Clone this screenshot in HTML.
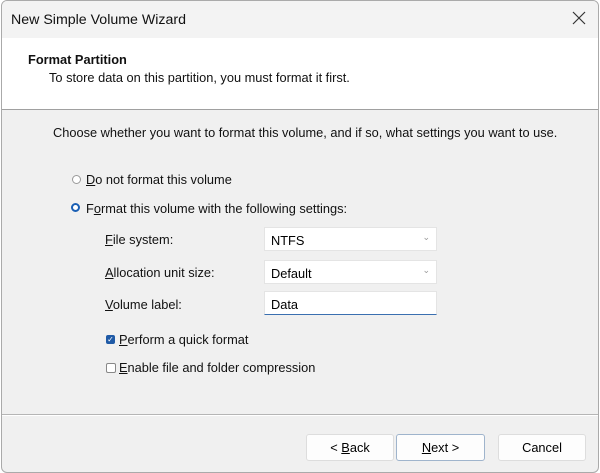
<!DOCTYPE html><html><head><style>
body{margin:0;width:600px;height:473px;background:#fff;font-family:"Liberation Sans",sans-serif;overflow:hidden;position:relative}
.win{position:absolute;left:1px;top:0;width:596px;height:471px;background:#f0f0f0;border:1px solid #aaa;border-radius:6px;overflow:hidden}
.title{position:absolute;left:0;top:0;right:0;height:37px;background:#f3f3f3;font-size:14.2px;color:#111}
.title span{position:absolute;left:9px;top:11px}
.x{position:absolute;right:12px;top:10px}
.hdr{position:absolute;left:0;right:0;top:37px;height:71px;background:#fff;border-bottom:1px solid #a0a0a0}
.t{position:absolute;font-size:12.8px;color:#111;white-space:nowrap}
u{text-decoration:underline;text-decoration-thickness:1px}
.sel{position:absolute;left:262px;width:173px;height:24px;background:#fff;border:1px solid #e4e4e4;box-sizing:border-box;font-size:12.8px}
.sel span{position:absolute;left:6px;top:5px}
.sel i{position:absolute;right:6px;top:4px;font-size:9px;color:#999;font-style:normal}
.btn{position:absolute;top:433px;height:27px;background:#fdfdfd;border:1px solid #ddd;box-sizing:border-box;font-size:12.8px;text-align:center;line-height:25px;border-radius:3px}
.sep{position:absolute;left:0;right:0;top:413px;height:1px;background:#b5b5b5;border-bottom:1px solid #fff}
</style></head><body><div class="win">
<div class="title"><span>New Simple Volume Wizard</span><svg class="x" width="14" height="14" viewBox="0 0 14 14"><path d="M1 1L13 13M13 1L1 13" stroke="#333" stroke-width="1.2"/></svg></div>
<div class="hdr">
<div class="t" style="left:26px;top:14px;font-weight:bold">Format Partition</div>
<div class="t" style="left:47px;top:32px">To store data on this partition, you must format it first.</div>
</div>
<div class="t" style="left:51px;top:124px">Choose whether you want to format this volume, and if so, what settings you want to use.</div>
<div style="position:absolute;left:70px;top:174px;width:7px;height:7px;border:1px solid #999;border-radius:50%;background:#fff"></div>
<div class="t" style="left:84px;top:171px"><u>D</u>o not format this volume</div>
<div style="position:absolute;left:69px;top:202px;width:5px;height:5px;border:2.5px solid #1a5fb4;border-radius:50%;background:#fff"></div>
<div class="t" style="left:84px;top:200px">F<u>o</u>rmat this volume with the following settings:</div>
<div class="t" style="left:103px;top:231px"><u>F</u>ile system:</div>
<div class="sel" style="top:226px"><span>NTFS</span><i>⌄</i></div>
<div class="t" style="left:103px;top:264px"><u>A</u>llocation unit size:</div>
<div class="sel" style="top:259px"><span>Default</span><i>⌄</i></div>
<div class="t" style="left:103px;top:296px"><u>V</u>olume label:</div>
<div class="sel" style="top:290px;border-bottom:1px solid #3a6fb0"><span>Data</span></div>
<div style="position:absolute;left:104px;top:334px;width:9px;height:9px;background:#1f5aa6;border-radius:2px;color:#fff;font-size:8px;line-height:9px;text-align:center">✓</div>
<div class="t" style="left:117px;top:331px"><u>P</u>erform a quick format</div>
<div style="position:absolute;left:104px;top:362px;width:8px;height:8px;border:1px solid #888;border-radius:2px;background:#fff"></div>
<div class="t" style="left:117px;top:359px"><u>E</u>nable file and folder compression</div>
<div class="sep"></div>
<div class="btn" style="left:304px;width:88px">&lt; <u>B</u>ack</div>
<div class="btn" style="left:394px;width:89px;border-color:#9fb4cc"><u>N</u>ext &gt;</div>
<div class="btn" style="left:496px;width:88px">Cancel</div>
</div></body></html>
